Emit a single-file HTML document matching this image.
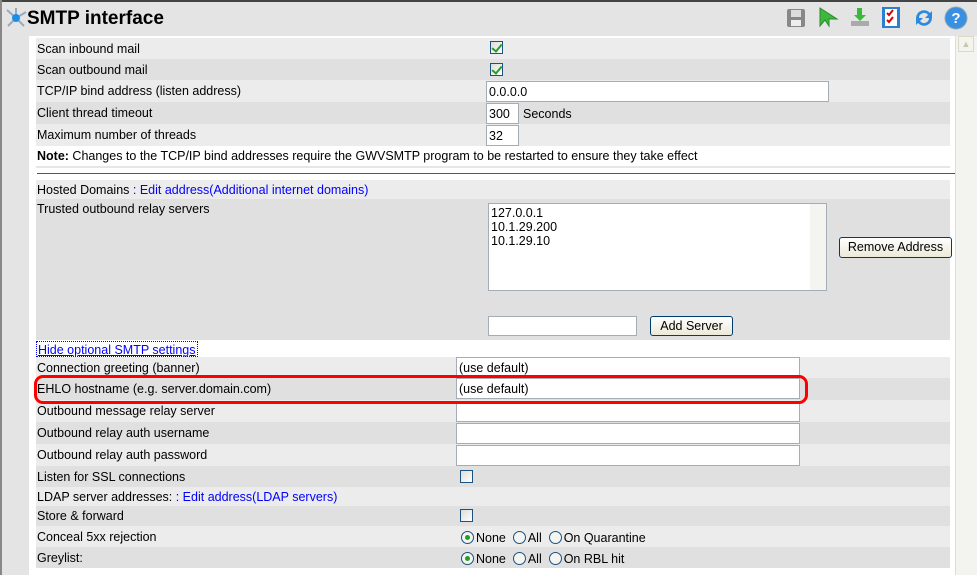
<!DOCTYPE html>
<html><head><meta charset="utf-8"><style>
*{margin:0;padding:0;box-sizing:border-box}
body{width:977px;height:575px;overflow:hidden;background:#e4e4e4;font-family:"Liberation Sans",sans-serif;font-size:12.5px;color:#000;position:relative}
.a{position:absolute}
.r{position:absolute;left:36px;width:914px;height:21px;line-height:23px;padding-left:1px;white-space:nowrap}
.l{background:#ececec}.d{background:#e0e0e0}
.in{position:absolute;background:#fff;border:1px solid #a5acb5;height:21px;line-height:20px;padding-left:2px}
.cb{position:absolute;width:13px;height:13px;border:1px solid #1c5180;background:linear-gradient(135deg,#dcdcd7,#fff)}
.ck::after{content:"";position:absolute;left:3px;top:0px;width:4px;height:8px;border:solid #21a121;border-width:0 2px 2px 0;transform:rotate(40deg)}
.rad{display:inline-block;width:13px;height:13px;border:1px solid #1c5180;border-radius:50%;background:#f4f4f0;vertical-align:-2px;margin-right:2px;position:relative}
.rad.on::after{content:"";position:absolute;left:3px;top:3px;width:5px;height:5px;border-radius:50%;background:#21a121}
.btn{position:absolute;border:1px solid #003c74;border-radius:3px;background:linear-gradient(#fff,#ece9d8);text-align:center;font-size:12.5px}
a,.lk{color:#0000ff;text-decoration:none}
</style></head><body>
<div class="a" style="left:0;top:0;width:977px;height:2px;background:#444"></div>
<div class="a" style="left:0;top:0;width:2px;height:575px;background:#888"></div>
<div class="a" style="left:29px;top:36px;width:926px;height:539px;background:#fff"></div>
<div class="a" style="left:955px;top:36px;width:22px;height:539px;background:#f3f3ef;border-left:1px solid #ddd"></div>
<div class="a" style="left:958px;top:36px;width:16px;height:16px;border:1px solid #dcd9c8;background:#f4f3ec;color:#c0c8b0;font-size:9px;text-align:center;line-height:14px">▲</div>
<svg class="a" style="left:4px;top:7px" width="24" height="22" viewBox="0 0 24 22"><g stroke="#9ab" stroke-width="2"><line x1="12" y1="11" x2="3" y2="3"/><line x1="12" y1="11" x2="22" y2="5"/><line x1="12" y1="11" x2="4" y2="19"/><line x1="12" y1="11" x2="20" y2="19"/><line x1="12" y1="11" x2="12" y2="1"/></g><circle cx="12" cy="11" r="4" fill="#1a8fe8"/></svg>
<div class="a" style="left:27px;top:8px;font-size:19px;font-weight:bold;font-family:'Liberation Sans',sans-serif">SMTP interface</div>
<svg class="a" style="left:786px;top:8px" width="20" height="20"><rect x="1" y="1" width="18" height="18" rx="2" fill="#888"/><rect x="5" y="2" width="10" height="7" fill="#ddd"/><rect x="5" y="12" width="10" height="6" fill="#eee"/></svg>
<svg class="a" style="left:817px;top:6px" width="22" height="22"><path d="M3 2 L3 20 L8 14 L12 20 L12 13 L20 13 Z" fill="#3cb83c" stroke="#2a8a2a"/></svg>
<svg class="a" style="left:849px;top:7px" width="22" height="22"><path d="M8 1h5v7h4l-6 6-6-6h3z" fill="#3cb83c"/><path d="M2 14h18v5H2z" fill="#aaa"/></svg>
<svg class="a" style="left:881px;top:6px" width="20" height="23"><rect x="1" y="1" width="18" height="21" fill="#2a7fd0"/><rect x="4" y="3" width="12" height="17" fill="#fff"/><path d="M6 7l2 2 4-5M6 14l2 2 4-5" stroke="#d00" stroke-width="2" fill="none"/></svg>
<svg class="a" style="left:912px;top:6px" width="24" height="24"><path d="M4 12a8 8 0 0 1 14-5l2-2v7h-7l3-3a5 5 0 0 0-9 3z" fill="#2a8ae0"/><path d="M20 12a8 8 0 0 1-14 5l-2 2v-7h7l-3 3a5 5 0 0 0 9-3z" fill="#2a8ae0"/></svg>
<svg class="a" style="left:944px;top:6px" width="24" height="24"><circle cx="12" cy="12" r="11" fill="#3b8fe0" stroke="#8ab"/><text x="12" y="17" font-size="15" font-weight="bold" fill="#fff" text-anchor="middle" font-family="Liberation Sans">?</text></svg>

<div class="r l" style="top:38px">Scan inbound mail</div>
<div class="cb ck" style="left:490px;top:41px"></div>
<div class="r d" style="top:59px">Scan outbound mail</div>
<div class="cb ck" style="left:490px;top:63px"></div>
<div class="r l" style="top:80px;height:22px">TCP/IP bind address (listen address)</div>
<div class="in" style="left:486px;top:81px;width:343px">0.0.0.0</div>
<div class="r d" style="top:102px;height:22px">Client thread timeout</div>
<div class="in" style="left:486px;top:103px;width:33px">300</div>
<div class="a" style="left:523px;top:107px">Seconds</div>
<div class="r l" style="top:124px;height:22px">Maximum number of threads</div>
<div class="in" style="left:486px;top:125px;width:33px">32</div>
<div class="r" style="top:145px"><b>Note:</b> Changes to the TCP/IP bind addresses require the GWVSMTP program to be restarted to ensure they take effect</div>
<div class="a" style="left:36px;top:166px;width:914px;height:2px;background:#e6e6e6"></div>
<div class="a" style="left:37px;top:173px;width:918px;height:1px;background:#555"></div>
<div class="r l" style="top:180px;height:19px;line-height:20px">Hosted Domains <span class="lk">: Edit address(Additional internet domains)</span></div>
<div class="r d" style="top:199px;height:141px;line-height:20px">Trusted outbound relay servers</div>
<div class="in" style="left:488px;top:203px;width:339px;height:88px;line-height:14px;padding-top:2px">127.0.0.1<br>10.1.29.200<br>10.1.29.10
<div class="a" style="right:0;top:0;width:16px;height:86px;background:#f4f4f0"></div></div>
<div class="btn" style="left:839px;top:237px;width:113px;height:21px;line-height:19px">Remove Address</div>
<div class="in" style="left:488px;top:316px;width:149px;height:20px"></div>
<div class="btn" style="left:650px;top:316px;width:83px;height:20px;line-height:18px">Add Server</div>
<div class="a" style="left:36px;top:341px;border:1px dotted #00f;color:#00f;line-height:16px;height:16px;padding:0 1px;text-decoration:underline">Hide optional SMTP settings</div>
<div class="r l" style="top:357px">Connection greeting (banner)</div>
<div class="in" style="left:456px;top:357px;width:344px">(use default)</div>
<div class="r d" style="top:378px;height:22px">EHLO hostname (e.g. server.domain.com)</div>
<div class="in" style="left:456px;top:378px;width:344px">(use default)</div>
<div class="r l" style="top:400px;height:22px">Outbound message relay server</div>
<div class="in" style="left:456px;top:401px;width:344px"></div>
<div class="r d" style="top:422px;height:22px">Outbound relay auth username</div>
<div class="in" style="left:456px;top:423px;width:344px"></div>
<div class="r l" style="top:444px;height:22px">Outbound relay auth password</div>
<div class="in" style="left:456px;top:445px;width:344px"></div>
<div class="r d" style="top:466px">Listen for SSL connections</div>
<div class="cb" style="left:460px;top:470px"></div>
<div class="r l" style="top:487px;height:19px;line-height:20px">LDAP server addresses: <span class="lk">: Edit address(LDAP servers)</span></div>
<div class="r d" style="top:506px;height:20px;line-height:21px">Store &amp; forward</div>
<div class="cb" style="left:460px;top:509px"></div>
<div class="r l" style="top:526px">Conceal 5xx rejection</div>
<div class="a" style="left:461px;top:531px"><span class="rad on"></span>None &nbsp;<span class="rad"></span>All &nbsp;<span class="rad"></span>On Quarantine</div>
<div class="r d" style="top:547px">Greylist:</div>
<div class="a" style="left:461px;top:552px"><span class="rad on"></span>None &nbsp;<span class="rad"></span>All &nbsp;<span class="rad"></span>On RBL hit</div>
<div class="a" style="left:34px;top:375px;width:774px;height:29px;border:3px solid #f00;border-radius:9px"></div>
</body></html>
